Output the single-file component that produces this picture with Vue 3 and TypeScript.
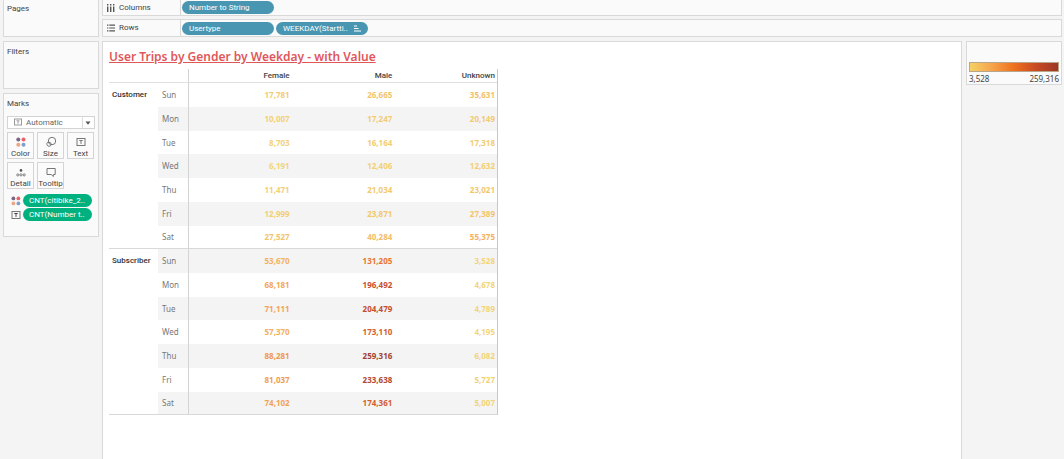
<script setup lang="ts">
import { ref } from 'vue'

interface DayRow {
  day: string
  values: number[]
}
interface Group {
  name: string
  rows: DayRow[]
}

const markType = ref('Automatic')
const genders = ['Female', 'Male', 'Unknown']
const days = ['Sun', 'Mon', 'Tue', 'Wed', 'Thu', 'Fri', 'Sat']

function build(name: string, data: number[][]): Group {
  return { name, rows: data.map((values, i) => ({ day: days[i], values })) }
}

const groups: Group[] = [
  build('Customer', [
    [17781, 26665, 35631],
    [10007, 17247, 20149],
    [8703, 16164, 17318],
    [6191, 12406, 12632],
    [11471, 21034, 23021],
    [12999, 23871, 27389],
    [27527, 40284, 55375],
  ]),
  build('Subscriber', [
    [53670, 131205, 3528],
    [68181, 196492, 4678],
    [71111, 204479, 4789],
    [57370, 173110, 4195],
    [88281, 259316, 6082],
    [81037, 233638, 5727],
    [74102, 174361, 5007],
  ]),
]

const MIN = 3528
const MAX = 259316
const stops = [
  [242, 214, 120],
  [243, 168, 88],
  [232, 118, 50],
  [200, 80, 48],
  [160, 66, 52],
]

function colorFor(value: number): string {
  const t = ((value - MIN) / (MAX - MIN)) * (stops.length - 1)
  const i = Math.min(Math.floor(t), stops.length - 2)
  const f = t - i
  const c = stops[i].map((a, k) => Math.round(a + (stops[i + 1][k] - a) * f))
  return `rgb(${c.join(',')})`
}

const fmt = (n: number): string => n.toLocaleString('en-US')
</script>

<template>
  <div class="workbook">
    <aside class="side">
      <section class="card pages"><h2>Pages</h2></section>
      <section class="card filters"><h2>Filters</h2></section>
      <section class="card marks">
        <h2>Marks</h2>
        <div class="type">
          <svg class="type-icon" width="8" height="8" viewBox="0 0 8 8">
            <rect x=".5" y="1" width="7" height="6" fill="none" stroke="#999" />
            <path d="M2.5 2.8h3M4 2.8v3" stroke="#888" stroke-width=".8" />
          </svg>
          <select v-model="markType" aria-label="Mark type">
            <option>Automatic</option>
            <option>Text</option>
          </select>
          <svg class="type-arrow" width="6" height="4" viewBox="0 0 6 4">
            <path d="M.5.5h5L3 3.7z" fill="#555" />
          </svg>
        </div>
        <div class="buttons">
          <button type="button">
            <svg width="12" height="12" viewBox="0 0 12 12">
              <circle cx="3.3" cy="3.5" r="2" fill="#7b6688" />
              <circle cx="8.5" cy="3.5" r="2" fill="#e8626a" />
              <circle cx="3.3" cy="8.7" r="2" fill="#f0a584" />
              <circle cx="8.5" cy="8.7" r="2" fill="#7f9fc9" />
            </svg>
            Color
          </button>
          <button type="button">
            <svg width="12" height="12" viewBox="0 0 12 12" fill="none" stroke="#666" stroke-width=".9">
              <circle cx="7" cy="5" r="3.7" />
              <path d="M3.5 6.4H2.6a2.2 2.2 0 1 0 3.6 2.2c.1-1-.4-1.8-1.2-2.2z" />
            </svg>
            Size
          </button>
          <button type="button">
            <svg width="12" height="12" viewBox="0 0 12 12" fill="none" stroke="#777">
              <rect x="2" y="2.5" width="8" height="7" />
              <path d="M4.3 4.5h3.4M6 4.5v3.4" />
            </svg>
            Text
          </button>
          <button type="button">
            <svg width="12" height="12" viewBox="0 0 12 12" fill="none" stroke="#666" stroke-width=".8">
              <circle cx="6" cy="4.4" r="1.3" fill="#555" stroke="none" />
              <circle cx="2.8" cy="8.9" r="1.1" />
              <circle cx="6" cy="8.9" r="1.1" />
              <circle cx="9.2" cy="8.9" r="1.1" />
            </svg>
            Detail
          </button>
          <button type="button">
            <svg width="12" height="12" viewBox="0 0 12 12" fill="none" stroke="#666" stroke-width=".9">
              <path d="M2 2.5h8.2v6H8.4v2L6.2 8.5H2z" />
            </svg>
            Tooltip
          </button>
        </div>
        <ul class="encodings">
          <li>
            <svg width="10" height="10" viewBox="0 0 10 10">
              <circle cx="2.4" cy="2.4" r="1.9" fill="#7b6688" />
              <circle cx="7.4" cy="2.4" r="1.9" fill="#e8626a" />
              <circle cx="2.4" cy="7.4" r="1.9" fill="#f0a584" />
              <circle cx="7.4" cy="7.4" r="1.9" fill="#7f9fc9" />
            </svg>
            <button type="button" class="pill green">CNT(citibike_2..</button>
          </li>
          <li>
            <svg width="10" height="10" viewBox="0 0 10 10" fill="none" stroke="#777">
              <rect x="1" y="1.5" width="8" height="7" />
              <path d="M3.3 3.5h3.4M5 3.5v3.4" stroke="#444" />
            </svg>
            <button type="button" class="pill green">CNT(Number t..</button>
          </li>
        </ul>
      </section>
    </aside>

    <div class="main">
      <div class="shelf columns">
        <div class="shelf-name">
          <svg width="8" height="8" viewBox="0 0 8 8" fill="#555">
            <path d="M0 0h1.4v1.4H0zM0 2.4h1.4V8H0zM3 0h1.4v1.4H3zM3 2.4h1.4V8H3zM6 0h1.4v1.4H6zM6 2.4h1.4V8H6z" />
          </svg>
          Columns
        </div>
        <div class="drop"><button type="button" class="pill">Number to String</button></div>
      </div>
      <div class="shelf rows">
        <div class="shelf-name">
          <svg width="8" height="8" viewBox="0 0 8 8" fill="#555">
            <path d="M0 .5h1.4v1.2H0zM2.3.5H8v1.2H2.3zM0 3.4h1.4v1.2H0zM2.3 3.4H8v1.2H2.3zM0 6.3h1.4v1.2H0zM2.3 6.3H8v1.2H2.3z" />
          </svg>
          Rows
        </div>
        <div class="drop">
          <button type="button" class="pill">Usertype</button>
          <button type="button" class="pill">
            WEEKDAY(Startti..
            <svg width="7" height="7" viewBox="0 0 7 7" stroke="#fff" fill="none">
              <path d="M0 1h3M0 3.5h4.5M0 6h7" />
            </svg>
          </button>
        </div>
      </div>

      <div class="lower">
        <main class="sheet">
          <h1>User Trips by Gender by Weekday - with Value</h1>
          <table>
            <colgroup>
              <col class="c-type" /><col class="c-day" /><col /><col /><col />
            </colgroup>
            <thead>
              <tr>
                <td colspan="2"></td>
                <th v-for="g in genders" :key="g" scope="col">{{ g }}</th>
              </tr>
            </thead>
            <tbody v-for="(group, gi) in groups" :key="group.name">
              <tr
                v-for="(row, i) in group.rows"
                :key="row.day"
                :class="{ band: (gi * 7 + i) % 2 === 1 }"
              >
                <th v-if="i === 0" class="type-name" scope="rowgroup" :rowspan="group.rows.length">
                  {{ group.name }}
                </th>
                <th class="day" scope="row">{{ row.day }}</th>
                <td v-for="(v, k) in row.values" :key="k" class="num" :style="{ color: colorFor(v) }">
                  {{ fmt(v) }}
                </td>
              </tr>
            </tbody>
          </table>
        </main>
        <section class="card legend">
          <div class="ramp"></div>
          <div class="range"><span>{{ fmt(MIN) }}</span><span>{{ fmt(MAX) }}</span></div>
        </section>
      </div>
    </div>
  </div>
</template>

<style>
body {
  margin: 0;
  background: #f4f4f4;
}
</style>

<style scoped>
.workbook,
.workbook * {
  box-sizing: border-box;
}
.workbook {
  display: flex;
  gap: 3px;
  min-height: 100vh;
  padding: 0 2px 0 3px;
  background: #f4f4f4;
  color: #444;
  font: 8px/12px Roboto, "Noto Sans", sans-serif;
}
button,
select {
  font: inherit;
  color: inherit;
}
svg {
  flex: none;
}
.card {
  background: #fafafa;
  border: 1px solid #d9d9d9;
}
.side {
  flex: none;
  width: 96px;
  display: flex;
  flex-direction: column;
  gap: 4px;
}
h2 {
  margin: 0;
  font-size: 8px;
  font-weight: 400;
  line-height: 14px;
}
.pages {
  border-top: 0;
  height: 37px;
  padding: 2px 3px;
}
.filters {
  height: 48px;
  padding: 3px;
}
.marks {
  min-height: 144px;
  padding: 3px;
}
.type {
  position: relative;
  margin-top: 5px;
}
.type select {
  display: block;
  width: 88px;
  height: 13px;
  padding: 0 0 0 18px;
  border: 1px solid #d4d4d4;
  border-radius: 0;
  appearance: none;
  background: linear-gradient(#ddd, #ddd) right 11px top / 1px 100% no-repeat #fff;
  color: #666;
  line-height: 11px;
}
.type-icon {
  position: absolute;
  left: 7px;
  top: 2px;
}
.type-arrow {
  position: absolute;
  left: 78px;
  top: 5px;
}
.buttons {
  display: grid;
  grid-template-columns: repeat(3, 27px);
  gap: 3px;
  margin-top: 3px;
}
.buttons button {
  display: flex;
  flex-direction: column;
  align-items: center;
  height: 27px;
  padding: 3px 0 0;
  border: 1px solid #d4d4d4;
  background: #fbfbfb;
  line-height: 11px;
}
.encodings {
  list-style: none;
  margin: 5px 0 0;
  padding: 0;
  display: grid;
  gap: 1px;
}
.encodings li {
  display: flex;
  align-items: center;
  gap: 2px;
  padding-left: 4px;
}
.pill {
  display: flex;
  align-items: center;
  justify-content: space-between;
  width: 92px;
  height: 13px;
  padding: 0 7px;
  border: 0;
  border-radius: 7px;
  background: #4996b2;
  color: #fff;
  line-height: 13px;
  white-space: nowrap;
}
.pill.green {
  width: 69px;
  padding: 0 6px;
  background: #00b180;
}
.main {
  flex: 1;
  min-width: 0;
  display: flex;
  flex-direction: column;
}
.shelf {
  display: flex;
  height: 18px;
  background: #fafafa;
  border: 1px solid #d9d9d9;
}
.shelf.columns {
  height: 16px;
  border-top: 0;
  margin-bottom: 3px;
}
.shelf-name {
  display: flex;
  align-items: center;
  gap: 4px;
  width: 78px;
  padding-left: 4px;
  border-right: 1px solid #d9d9d9;
  line-height: 14px;
}
.drop {
  display: flex;
  align-items: center;
  gap: 2px;
  padding-left: 1px;
}
.columns .drop {
  padding-bottom: 1px;
}
.lower {
  flex: 1;
  display: flex;
  align-items: flex-start;
  gap: 4px;
  margin-top: 4px;
}
.sheet {
  flex: 1;
  align-self: stretch;
  padding: 6px;
  background: #fff;
  border: 1px solid #d9d9d9;
  border-bottom: 0;
}
h1 {
  margin: 0 0 3px;
  color: #e15759;
  font: 600 12px/18px "Noto Sans", "Open Sans", sans-serif;
  text-decoration: underline;
}
table {
  width: 389px;
  table-layout: fixed;
  border-collapse: separate;
  border-spacing: 0;
  border-right: 1px solid #c8c8c8;
}
.c-type {
  width: 49px;
}
.c-day {
  width: 31px;
}
th,
td {
  padding: 0 2px 0 0;
  text-align: right;
  line-height: 12px;
}
thead td,
thead th {
  height: 14px;
  padding-top: 1px;
  border-bottom: 1px solid #e0e0e0;
  font-weight: 500;
}
tbody tr {
  height: 24px;
}
tbody tr:nth-child(4n + 3) {
  height: 23px;
}
thead td,
.day {
  border-right: 1px solid #d4d4d4;
}
.type-name {
  padding: 6px 0 0 3px;
  text-align: left;
  vertical-align: top;
  font-weight: 500;
  color: #333;
}
.day,
.num,
.range {
  font-family: "Noto Sans", "Open Sans", sans-serif;
}
.day {
  padding-left: 4px;
  text-align: left;
  font-weight: 400;
  color: #777;
}
.num {
  font-weight: 700;
}
.band .day,
.band .num {
  background: #f4f4f4;
}
.type-name,
tbody tr:last-child .day,
tbody tr:last-child .num {
  border-bottom: 1px solid #d9d9d9;
}
.legend {
  flex: none;
  width: 96px;
  padding: 20px 2px 0;
  height: 44px;
}
.ramp {
  height: 10px;
  border: 1px solid #b8a58a;
  background: linear-gradient(90deg, #f4d166, #f6a44c 25%, #ee701e 50%, #c84a24 75%, #9c3826);
}
.range {
  display: flex;
  justify-content: space-between;
  line-height: 13px;
}
</style>
